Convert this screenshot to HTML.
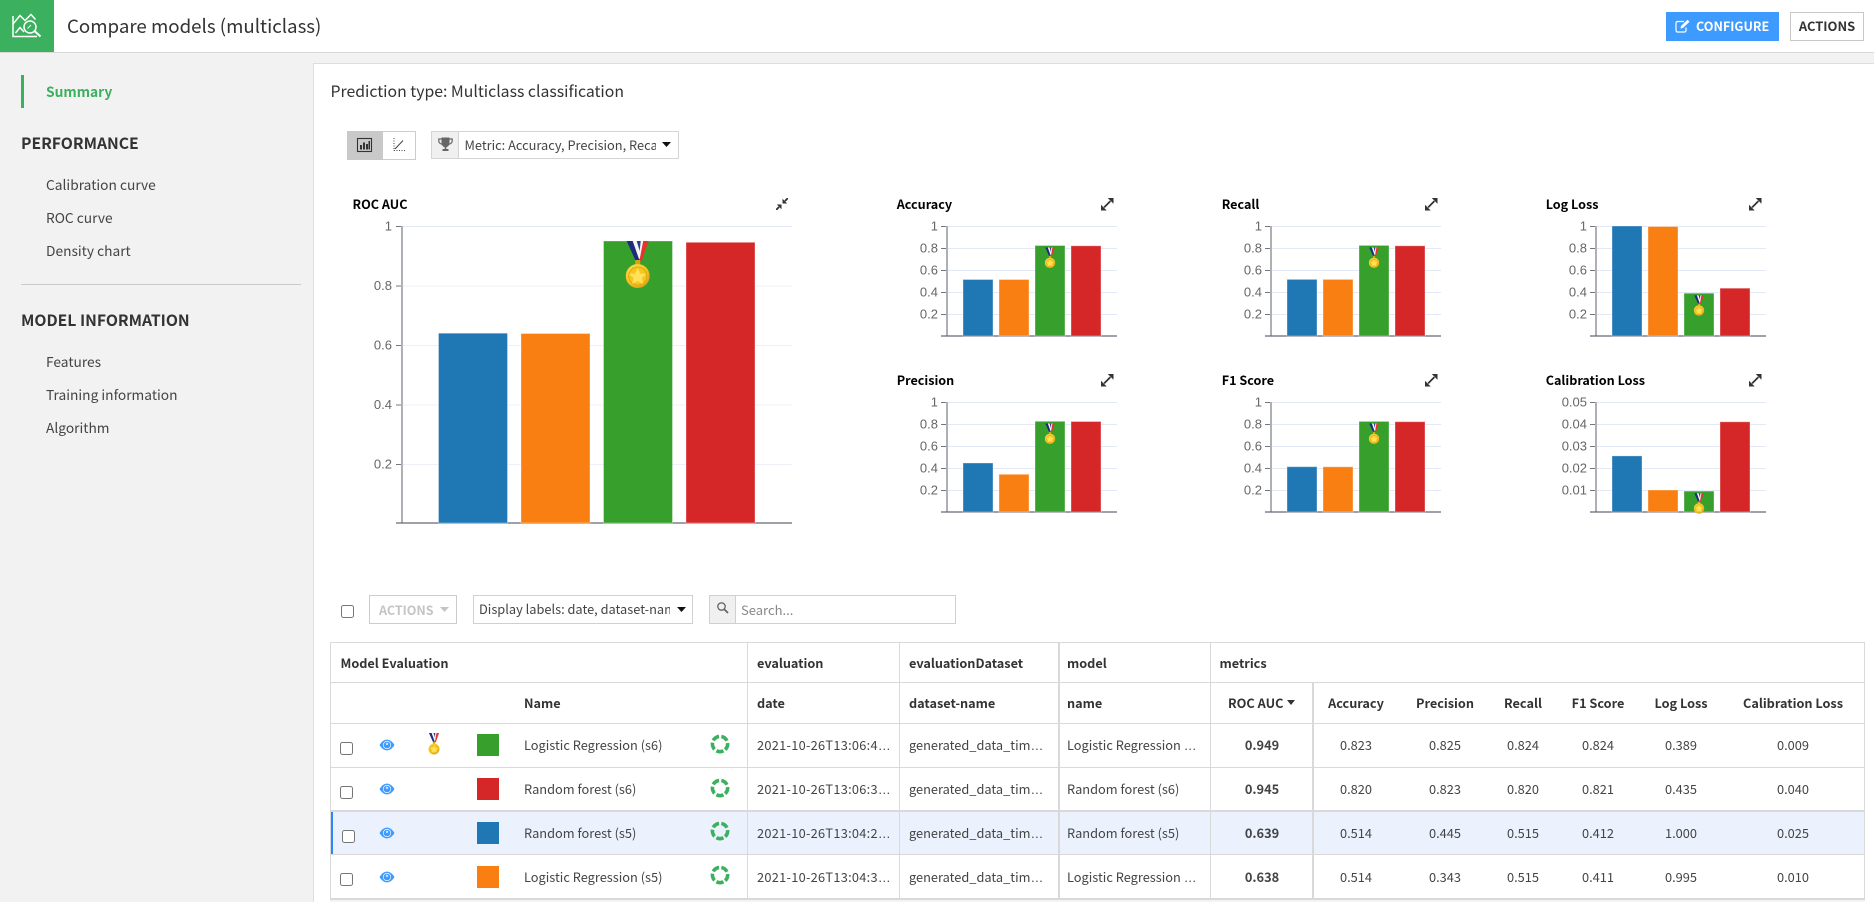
<!DOCTYPE html>
<html><head><meta charset="utf-8"><title>Compare models (multiclass)</title>
<style>
html,body{margin:0;padding:0;width:1874px;height:902px;overflow:hidden;background:#f2f2f2}
body{position:relative;font-family:"Noto Sans CJK JP","Liberation Sans",sans-serif;color:#333;font-size:14px}
.t{position:absolute;white-space:nowrap;line-height:20px;height:20px}
.c{transform:translateX(-50%)}
.b{font-weight:700}
.el{font-family:"Liberation Sans",sans-serif}
.box{position:absolute;box-sizing:border-box}
.h{position:absolute;left:330px;width:1535px;height:1px;background:#d9d9d9}
.v{position:absolute;width:1px;background:#d9d9d9}
.cb{position:absolute;box-sizing:border-box;width:13px;height:13px;border:1px solid #767676;border-radius:2.5px;background:#fff}
.sq{position:absolute;left:477px;width:22px;height:22px}
svg{position:absolute;overflow:visible}
.sb{font-size:13.75px;color:#444}
.th{font-size:12.7px;font-weight:700;color:#333}
.td{font-size:12.8px;color:#444}
.dt{letter-spacing:.27px}
.m{font-size:12.8px;color:#444}
.ax{font:13px "Liberation Sans",sans-serif;fill:#666;text-anchor:end}
.ct{font:700 12.6px "Noto Sans CJK JP","Liberation Sans",sans-serif;fill:#000}
</style></head><body>

<!-- header -->
<div class="box" style="left:0;top:0;width:1874px;height:53px;background:#fff;border-bottom:1px solid #d9d9d9"></div>
<div class="box" style="left:0;top:0;width:54px;height:52px;background:#3bb05f"></div>
<svg style="left:0;top:0" width="54" height="52" fill="none" stroke="#fff" stroke-width="1.5">
<path d="M13 16V36.5H37"/><path d="M13 24L20 15.500L25 20.500L31 14.500L35.500 19.500"/><path d="M15.500 33L20 27.500L24 32"/>
<circle cx="30" cy="27" r="6"/><path d="M34.500 31L40.500 36.500" stroke-width="2"/><path d="M27.500 28.500L31 25" stroke-width="1"/></svg>
<div class="t" style="left:67px;top:16px;font-size:18.7px;color:#333">Compare models (multiclass)</div>

<div class="box" style="left:1666px;top:12px;width:113px;height:29px;background:#3d9bff"></div>
<svg style="left:1675px;top:19px" width="16" height="14" fill="none" stroke="#fff" stroke-width="1.200"><path d="M11 8.500V11.500a1.500 1.500 0 0 1-1.500 1.500H2.500A1.500 1.500 0 0 1 1 11.500V4A1.500 1.500 0 0 1 2.500 2.500H9"/><path d="M5.500 9.500L6 7L12.500 .8L14.500 2.800L8 9Z" fill="#fff" stroke="none"/></svg>
<div class="t b" style="left:1696px;top:16px;font-size:12.6px;color:#fff">CONFIGURE</div>
<div class="box" style="left:1790px;top:12px;width:74px;height:29px;background:#fff;border:1px solid #c8c8c8"></div>
<div class="t b c" style="left:1827px;top:16px;font-size:12.9px;color:#333">ACTIONS</div>

<!-- sidebar -->
<div class="box" style="left:21px;top:75px;width:3px;height:33px;background:#3bb05f"></div>
<div class="t b" style="left:46px;top:81px;font-size:13.8px;color:#3bb05f">Summary</div>
<div class="t b" style="left:21px;top:133px;font-size:15.7px;color:#333">PERFORMANCE</div>
<div class="t sb" style="left:46px;top:174px">Calibration curve</div>
<div class="t sb" style="left:46px;top:207px">ROC curve</div>
<div class="t sb" style="left:46px;top:240px">Density chart</div>
<div class="box" style="left:21px;top:284px;width:280px;height:1px;background:#c9c9c9"></div>
<div class="t b" style="left:21px;top:310px;font-size:15.7px;color:#333">MODEL INFORMATION</div>
<div class="t sb" style="left:46px;top:351px">Features</div>
<div class="t sb" style="left:46px;top:384px">Training information</div>
<div class="t sb" style="left:46px;top:417px">Algorithm</div>

<!-- panel -->
<div class="box" style="left:313px;top:63px;width:1561px;height:839px;background:#fff;border-top:1px solid #dedede;border-left:1px solid #dedede"></div>
<div class="t" style="left:330.5px;top:81px;font-size:15.8px;color:#333">Prediction type: Multiclass classification</div>

<!-- chart toolbar -->
<div class="box" style="left:347px;top:131px;width:69px;height:29px;background:#fff;border:1px solid #ccc"></div>
<div class="box" style="left:347px;top:131px;width:36px;height:29px;background:#c9c9c9"></div>
<svg style="left:357px;top:138px" width="15" height="14"><rect x=".5" y=".5" width="14" height="13" fill="none" stroke="#333" stroke-width="1.100"/><rect x="3" y="7" width="2" height="4.500" fill="#333"/><rect x="6" y="4.500" width="2" height="7" fill="#333"/><rect x="9" y="6" width="2" height="5.500" fill="#333"/><rect x="11.500" y="3" width="1.500" height="8.500" fill="#333"/></svg>
<svg style="left:393px;top:138px" width="14" height="14" fill="none" stroke="#444"><path d="M1 0V13" stroke-dasharray="1 1.500" stroke-width="1"/><path d="M1 12.500H13" stroke-dasharray="1 1.500" stroke-width="1"/><path d="M2 11L10 2.500" stroke-width="1"/></svg>
<div class="box" style="left:431px;top:131px;width:248px;height:28px;background:#fff;border:1px solid #d4d4d4"></div>
<div class="box" style="left:432px;top:132px;width:27px;height:26px;background:#f0f0f0;border-right:1px solid #d4d4d4"></div>
<svg style="left:438px;top:137px" width="15" height="15" fill="#666"><path d="M3.500 .5H11.500V6C11.500 8.500 9.500 10 8.300 10.200V12H10.500V14H4.500V12H6.700V10.200C5.500 10 3.500 8.500 3.500 6Z"/><path d="M3.500 2H.8V4C.8 5.800 2.500 7 4 7.200M11.500 2H14.200V4C14.200 5.800 12.500 7 11 7.200" fill="none" stroke="#666" stroke-width="1.200"/></svg>
<div class="t" style="left:464.5px;top:135px;width:191px;overflow:hidden;font-size:12.8px;color:#444">Metric: Accuracy, Precision, Recall</div>
<svg style="left:662px;top:142px" width="9" height="5"><path d="M0 0H9L4.500 5Z" fill="#111"/></svg>

<!-- charts -->
<svg style="left:0;top:0" width="1874" height="902">
<defs>
<radialGradient id="gold" cx=".4" cy=".35" r=".7"><stop offset="0" stop-color="#ffe870"/><stop offset=".7" stop-color="#f4c21e"/><stop offset="1" stop-color="#d9991a"/></radialGradient>
<symbol id="medal" viewBox="0 0 48 96">
<path d="M30 0H46L32 40H26Z" fill="#e8342c"/>
<path d="M2 0H14L28 40H20Z" fill="#1c2a80"/>
<path d="M14 0H22L30 26L27 37Z" fill="#f6f6f6"/>
<path d="M22 0H30L29 22Z" fill="#2a3a9a"/>
<path d="M30 0H35L28 36L27 30Z" fill="#f6f6f6"/>
<rect x="19" y="38" width="10" height="9" fill="#d8a415"/>
<circle cx="24" cy="70" r="24" fill="url(#gold)"/>
<circle cx="24" cy="70" r="18" fill="#f6c81f" stroke="#e0a814" stroke-width="2"/>
<path d="M24 54L29 65L41 66L32 74L35 86L24 80L13 86L16 74L7 66L19 65Z" fill="#ffe15a"/>
</symbol>
<symbol id="ex" viewBox="0 0 12 12"><path d="M12 0V5.500L6.500 0Z M0 12V6.500L5.500 12Z" fill="#333"/><path d="M3 9L9 3" stroke="#333" stroke-width="1.700"/></symbol>
<symbol id="co" viewBox="0 0 12 12"><path d="M6.500 5.500V.8L11.200 5.500Z M5.500 6.500V11.200L.8 6.500Z" fill="#333"/><path d="M12 0L9 3M0 12L3 9" stroke="#333" stroke-width="1.800"/></symbol>
<symbol id="axes" viewBox="-6 0 176 111"><g stroke="#e2e8f6" stroke-width="1"><path d="M0 .5H170M0 22.500H170M0 44.500H170M0 66.500H170M0 88.500H170"/></g><g stroke="#777" stroke-width="1"><path d="M-6 .5H0M-6 22.500H0M-6 44.500H0M-6 66.500H0M-6 88.500H0"/></g><path d="M0 0V110" stroke="#aeb0b6" stroke-width="2"/><path d="M-6 110H170" stroke="#666873" stroke-width="1.200"/></symbol>
</defs>

<!-- ROC AUC -->
<text class="ct" x="352.5" y="209">ROC AUC</text>
<use href="#co" x="776" y="198" width="12" height="12"/>
<path d="M402 226.500H792" stroke="#e2e8f6"/>
<g stroke="#edf0f8" stroke-width="1"><path d="M402 286H792M402 345.500H792M402 405H792M402 464.500H792"/></g>
<g stroke="#777" stroke-width="1"><path d="M396 226.500H402M396 286H402M396 345.500H402M396 405H402M396 464.500H402"/></g>
<path d="M402 226V523" stroke="#aeb0b6" stroke-width="2"/><path d="M396 523H792" stroke="#666873" stroke-width="1.200"/>
<g class="ax"><text class="ax" x="392" y="230.500">1</text><text class="ax" x="392" y="290">0.8</text><text class="ax" x="392" y="349.500">0.6</text><text class="ax" x="392" y="409">0.4</text><text class="ax" x="392" y="468.500">0.2</text></g>
<g stroke="#fff" stroke-opacity=".35" stroke-width="1">
<rect x="438.500" y="333.200" width="69" height="189.800" fill="#1f77b4"/>
<rect x="521" y="333.500" width="69" height="189.500" fill="#f97f12"/>
<rect x="603.500" y="241" width="69" height="282" fill="#37a02c"/>
<rect x="686" y="242.300" width="69" height="280.700" fill="#d62728"/>
</g>
<use href="#medal" x="625.700" y="241" width="24" height="48"/>

<!-- Accuracy -->
<g transform="translate(947,226)">
<use href="#axes" x="-6" y="0" width="176" height="111"/>
<text class="ct" x="-50.300" y="-17">Accuracy</text><use href="#ex" x="154" y="-28" width="12.500" height="12.500"/>
<text class="ax" x="-9" y="4.500">1</text><text class="ax" x="-9" y="26.500">0.8</text><text class="ax" x="-9" y="48.500">0.6</text><text class="ax" x="-9" y="70.500">0.4</text><text class="ax" x="-9" y="92.500">0.2</text>
<g stroke="#fff" stroke-opacity=".35"><rect x="16" y="53.500" width="30" height="56.500" fill="#1f77b4"/><rect x="52" y="53.500" width="30" height="56.500" fill="#f97f12"/><rect x="88" y="19.500" width="30" height="90.500" fill="#37a02c"/><rect x="124" y="19.800" width="30" height="90.200" fill="#d62728"/></g>
<use href="#medal" x="97.800" y="21.500" width="10.500" height="21"/>
</g>
<!-- Recall -->
<g transform="translate(1271,226)">
<use href="#axes" x="-6" y="0" width="176" height="111"/>
<text class="ct" x="-49.300" y="-17">Recall</text><use href="#ex" x="154" y="-28" width="12.500" height="12.500"/>
<text class="ax" x="-9" y="4.500">1</text><text class="ax" x="-9" y="26.500">0.8</text><text class="ax" x="-9" y="48.500">0.6</text><text class="ax" x="-9" y="70.500">0.4</text><text class="ax" x="-9" y="92.500">0.2</text>
<g stroke="#fff" stroke-opacity=".35"><rect x="16" y="53.400" width="30" height="56.600" fill="#1f77b4"/><rect x="52" y="53.400" width="30" height="56.600" fill="#f97f12"/><rect x="88" y="19.400" width="30" height="90.600" fill="#37a02c"/><rect x="124" y="19.800" width="30" height="90.200" fill="#d62728"/></g>
<use href="#medal" x="97.800" y="21.500" width="10.500" height="21"/>
</g>
<!-- Log Loss -->
<g transform="translate(1596,226)">
<use href="#axes" x="-6" y="0" width="176" height="111"/>
<text class="ct" x="-50.300" y="-17">Log Loss</text><use href="#ex" x="153" y="-28" width="12.500" height="12.500"/>
<text class="ax" x="-9" y="4.500">1</text><text class="ax" x="-9" y="26.500">0.8</text><text class="ax" x="-9" y="48.500">0.6</text><text class="ax" x="-9" y="70.500">0.4</text><text class="ax" x="-9" y="92.500">0.2</text>
<g stroke="#fff" stroke-opacity=".35"><rect x="16" y="0" width="30" height="110" fill="#1f77b4"/><rect x="52" y=".5" width="30" height="109.500" fill="#f97f12"/><rect x="88" y="67.200" width="30" height="42.800" fill="#37a02c"/><rect x="124" y="62.200" width="30" height="47.800" fill="#d62728"/></g>
<use href="#medal" x="97.800" y="69.200" width="10.500" height="21"/>
</g>
<!-- Precision -->
<g transform="translate(947,402)">
<use href="#axes" x="-6" y="0" width="176" height="111"/>
<text class="ct" x="-50.300" y="-17">Precision</text><use href="#ex" x="154" y="-28" width="12.500" height="12.500"/>
<text class="ax" x="-9" y="4.500">1</text><text class="ax" x="-9" y="26.500">0.8</text><text class="ax" x="-9" y="48.500">0.6</text><text class="ax" x="-9" y="70.500">0.4</text><text class="ax" x="-9" y="92.500">0.2</text>
<g stroke="#fff" stroke-opacity=".35"><rect x="16" y="61" width="30" height="49" fill="#1f77b4"/><rect x="52" y="72.300" width="30" height="37.700" fill="#f97f12"/><rect x="88" y="19.300" width="30" height="90.700" fill="#37a02c"/><rect x="124" y="19.500" width="30" height="90.500" fill="#d62728"/></g>
<use href="#medal" x="97.800" y="21.500" width="10.500" height="21"/>
</g>
<!-- F1 -->
<g transform="translate(1271,402)">
<use href="#axes" x="-6" y="0" width="176" height="111"/>
<text class="ct" x="-49.300" y="-17">F1 Score</text><use href="#ex" x="154" y="-28" width="12.500" height="12.500"/>
<text class="ax" x="-9" y="4.500">1</text><text class="ax" x="-9" y="26.500">0.8</text><text class="ax" x="-9" y="48.500">0.6</text><text class="ax" x="-9" y="70.500">0.4</text><text class="ax" x="-9" y="92.500">0.2</text>
<g stroke="#fff" stroke-opacity=".35"><rect x="16" y="64.700" width="30" height="45.300" fill="#1f77b4"/><rect x="52" y="64.800" width="30" height="45.200" fill="#f97f12"/><rect x="88" y="19.400" width="30" height="90.600" fill="#37a02c"/><rect x="124" y="19.700" width="30" height="90.300" fill="#d62728"/></g>
<use href="#medal" x="97.800" y="21.500" width="10.500" height="21"/>
</g>
<!-- Calibration Loss -->
<g transform="translate(1596,402)">
<use href="#axes" x="-6" y="0" width="176" height="111"/>
<text class="ct" x="-50.300" y="-17">Calibration Loss</text><use href="#ex" x="153" y="-28" width="12.500" height="12.500"/>
<text class="ax" x="-9" y="4.500">0.05</text><text class="ax" x="-9" y="26.500">0.04</text><text class="ax" x="-9" y="48.500">0.03</text><text class="ax" x="-9" y="70.500">0.02</text><text class="ax" x="-9" y="92.500">0.01</text>
<g stroke="#fff" stroke-opacity=".35"><rect x="16" y="53.900" width="30" height="56.100" fill="#1f77b4"/><rect x="52" y="88" width="30" height="22" fill="#f97f12"/><rect x="88" y="89.100" width="30" height="20.900" fill="#37a02c"/><rect x="124" y="19.800" width="30" height="90.200" fill="#d62728"/></g>
<use href="#medal" x="97.800" y="91.100" width="10.500" height="21"/>
</g>
</svg>

<!-- table toolbar -->
<div class="cb" style="left:341px;top:605px"></div>
<div class="box" style="left:369px;top:595px;width:88px;height:29px;background:#fff;border:1px solid #ccc"></div>
<div class="t b" style="left:379px;top:600px;font-size:12.5px;color:#c4c4c4">ACTIONS</div>
<svg style="left:440px;top:607px" width="9" height="5"><path d="M0 0H9L4.500 5Z" fill="#c4c4c4"/></svg>
<div class="box" style="left:473px;top:595px;width:220px;height:29px;background:#fff;border:1px solid #d0d0d0"></div>
<div class="t" style="left:479px;top:599px;width:191px;overflow:hidden;font-size:12.8px;color:#444">Display labels: date, dataset-name, name</div>
<svg style="left:677px;top:607px" width="9" height="5"><path d="M0 0H9L4.500 5Z" fill="#111"/></svg>
<div class="box" style="left:709px;top:595px;width:247px;height:29px;background:#fff;border:1px solid #d0d0d0"></div>
<div class="box" style="left:710px;top:596px;width:26px;height:27px;background:#f0f0f0;border-right:1px solid #d0d0d0"></div>
<svg style="left:717px;top:602px" width="12" height="12" fill="none" stroke="#666" stroke-width="1.300"><circle cx="4.500" cy="4.500" r="3.700"/><path d="M7.300 7.300L11 11" stroke-width="1.800"/></svg>
<div class="t" style="left:741px;top:600px;font-size:13px;color:#888">Search...</div>

<!-- table -->
<div class="box" style="left:330px;top:642px;width:1535px;height:256px;background:#fff"></div>
<div class="box" style="left:330px;top:811px;width:1535px;height:43px;background:#ebf2fd"></div>
<div class="box" style="left:330px;top:811px;width:3px;height:43px;background:#2d86fb"></div>
<div class="h" style="top:642px"></div>
<div class="h" style="top:682px"></div>
<div class="h" style="top:723px"></div>
<div class="h" style="top:767px"></div>
<div class="h" style="top:810px;height:2px"></div>
<div class="h" style="top:854px"></div>
<div class="h" style="top:898px;height:2px"></div>
<div class="box" style="left:330px;top:900px;width:1535px;height:2px;background:#f4f4f4"></div>
<div class="v" style="left:330px;top:642px;height:257px"></div>
<div class="v" style="left:747px;top:642px;height:257px"></div>
<div class="v" style="left:899px;top:642px;height:257px"></div>
<div class="v" style="left:1058px;top:642px;height:257px;width:2px"></div>
<div class="v" style="left:1210px;top:642px;height:257px"></div>
<div class="v" style="left:1312px;top:682px;height:217px;width:2px"></div>
<div class="v" style="left:1864px;top:642px;height:257px"></div>

<div class="t th" style="left:340.500px;top:653px">Model Evaluation</div>
<div class="t th" style="left:757px;top:653px">evaluation</div>
<div class="t th" style="left:909px;top:653px">evaluationDataset</div>
<div class="t th" style="left:1067px;top:653px">model</div>
<div class="t th" style="left:1219.500px;top:653px">metrics</div>
<div class="t th" style="left:524px;top:693px">Name</div>
<div class="t th" style="left:757px;top:693px">date</div>
<div class="t th" style="left:909px;top:693px">dataset-name</div>
<div class="t th" style="left:1067px;top:693px">name</div>
<div class="t th" style="left:1228px;top:693px">ROC AUC</div>
<svg style="left:1287px;top:700px" width="8" height="5"><path d="M0 0H8L4 5Z" fill="#333"/></svg>
<div class="t th c" style="left:1356px;top:693px">Accuracy</div>
<div class="t th c" style="left:1445px;top:693px">Precision</div>
<div class="t th c" style="left:1523px;top:693px">Recall</div>
<div class="t th c" style="left:1598px;top:693px">F1 Score</div>
<div class="t th c" style="left:1681px;top:693px">Log Loss</div>
<div class="t th c" style="left:1793px;top:693px">Calibration Loss</div>

<!-- row icons -->
<div class="cb" style="left:340px;top:742px"></div>
<div class="cb" style="left:340px;top:786px"></div>
<div class="cb" style="left:342px;top:830px"></div>
<div class="cb" style="left:340px;top:873px"></div>
<svg style="left:0;top:0" width="1874" height="902">
<defs><symbol id="eye" viewBox="0 0 14 10"><path d="M0 5C2.500 1 5 0 7 0S11.500 1 14 5C11.500 9 9 10 7 10S2.500 9 0 5Z" fill="#3d9bff"/><circle cx="7" cy="5" r="3.500" fill="#3d9bff" stroke="#fff" stroke-width=".6"/><circle cx="7" cy="4" r="1.100" fill="#cfe6ff"/></symbol>
<symbol id="ring" viewBox="0 0 20 20"><circle cx="10" cy="10" r="7.600" fill="none" stroke="#3bb05f" stroke-width="3.600" stroke-dasharray="7.200 2.350" transform="rotate(63 10 10)"/></symbol></defs>
<use href="#eye" x="379.500" y="739.500" width="15" height="11"/>
<use href="#eye" x="379.500" y="783.500" width="15" height="11"/>
<use href="#eye" x="379.500" y="827.500" width="15" height="11"/>
<use href="#eye" x="379.500" y="871.500" width="15" height="11"/>
<use href="#medal" x="428.500" y="733" width="11" height="22"/>
<use href="#ring" x="710" y="734" width="20" height="20"/>
<use href="#ring" x="710" y="778" width="20" height="20"/>
<use href="#ring" x="710" y="821" width="20" height="20"/>
<use href="#ring" x="710" y="865" width="20" height="20"/>
</svg>
<div class="sq" style="top:734px;background:#37a02c"></div>
<div class="sq" style="top:778px;background:#d62728"></div>
<div class="sq" style="top:822px;background:#1f77b4"></div>
<div class="sq" style="top:866px;background:#f97f12"></div>

<!-- row 1 -->
<div class="t td" style="left:524px;top:735px">Logistic Regression (s6)</div>
<div class="t td dt" style="left:757px;top:735px">2021-10-26T13:06:4<span class="el">…</span></div>
<div class="t td" style="left:909px;top:735px">generated_data_tim<span class="el">…</span></div>
<div class="t td" style="left:1067px;top:735px">Logistic Regression <span class="el">…</span></div>
<div class="t m b c" style="left:1262px;top:735px">0.949</div>
<div class="t m c" style="left:1356px;top:735px">0.823</div>
<div class="t m c" style="left:1445px;top:735px">0.825</div>
<div class="t m c" style="left:1523px;top:735px">0.824</div>
<div class="t m c" style="left:1598px;top:735px">0.824</div>
<div class="t m c" style="left:1681px;top:735px">0.389</div>
<div class="t m c" style="left:1793px;top:735px">0.009</div>
<!-- row 2 -->
<div class="t td" style="left:524px;top:779px">Random forest (s6)</div>
<div class="t td dt" style="left:757px;top:779px">2021-10-26T13:06:3<span class="el">…</span></div>
<div class="t td" style="left:909px;top:779px">generated_data_tim<span class="el">…</span></div>
<div class="t td" style="left:1067px;top:779px">Random forest (s6)</div>
<div class="t m b c" style="left:1262px;top:779px">0.945</div>
<div class="t m c" style="left:1356px;top:779px">0.820</div>
<div class="t m c" style="left:1445px;top:779px">0.823</div>
<div class="t m c" style="left:1523px;top:779px">0.820</div>
<div class="t m c" style="left:1598px;top:779px">0.821</div>
<div class="t m c" style="left:1681px;top:779px">0.435</div>
<div class="t m c" style="left:1793px;top:779px">0.040</div>
<!-- row 3 -->
<div class="t td" style="left:524px;top:823px">Random forest (s5)</div>
<div class="t td dt" style="left:757px;top:823px">2021-10-26T13:04:2<span class="el">…</span></div>
<div class="t td" style="left:909px;top:823px">generated_data_tim<span class="el">…</span></div>
<div class="t td" style="left:1067px;top:823px">Random forest (s5)</div>
<div class="t m b c" style="left:1262px;top:823px">0.639</div>
<div class="t m c" style="left:1356px;top:823px">0.514</div>
<div class="t m c" style="left:1445px;top:823px">0.445</div>
<div class="t m c" style="left:1523px;top:823px">0.515</div>
<div class="t m c" style="left:1598px;top:823px">0.412</div>
<div class="t m c" style="left:1681px;top:823px">1.000</div>
<div class="t m c" style="left:1793px;top:823px">0.025</div>
<!-- row 4 -->
<div class="t td" style="left:524px;top:867px">Logistic Regression (s5)</div>
<div class="t td dt" style="left:757px;top:867px">2021-10-26T13:04:3<span class="el">…</span></div>
<div class="t td" style="left:909px;top:867px">generated_data_tim<span class="el">…</span></div>
<div class="t td" style="left:1067px;top:867px">Logistic Regression <span class="el">…</span></div>
<div class="t m b c" style="left:1262px;top:867px">0.638</div>
<div class="t m c" style="left:1356px;top:867px">0.514</div>
<div class="t m c" style="left:1445px;top:867px">0.343</div>
<div class="t m c" style="left:1523px;top:867px">0.515</div>
<div class="t m c" style="left:1598px;top:867px">0.411</div>
<div class="t m c" style="left:1681px;top:867px">0.995</div>
<div class="t m c" style="left:1793px;top:867px">0.010</div>

</body></html>
